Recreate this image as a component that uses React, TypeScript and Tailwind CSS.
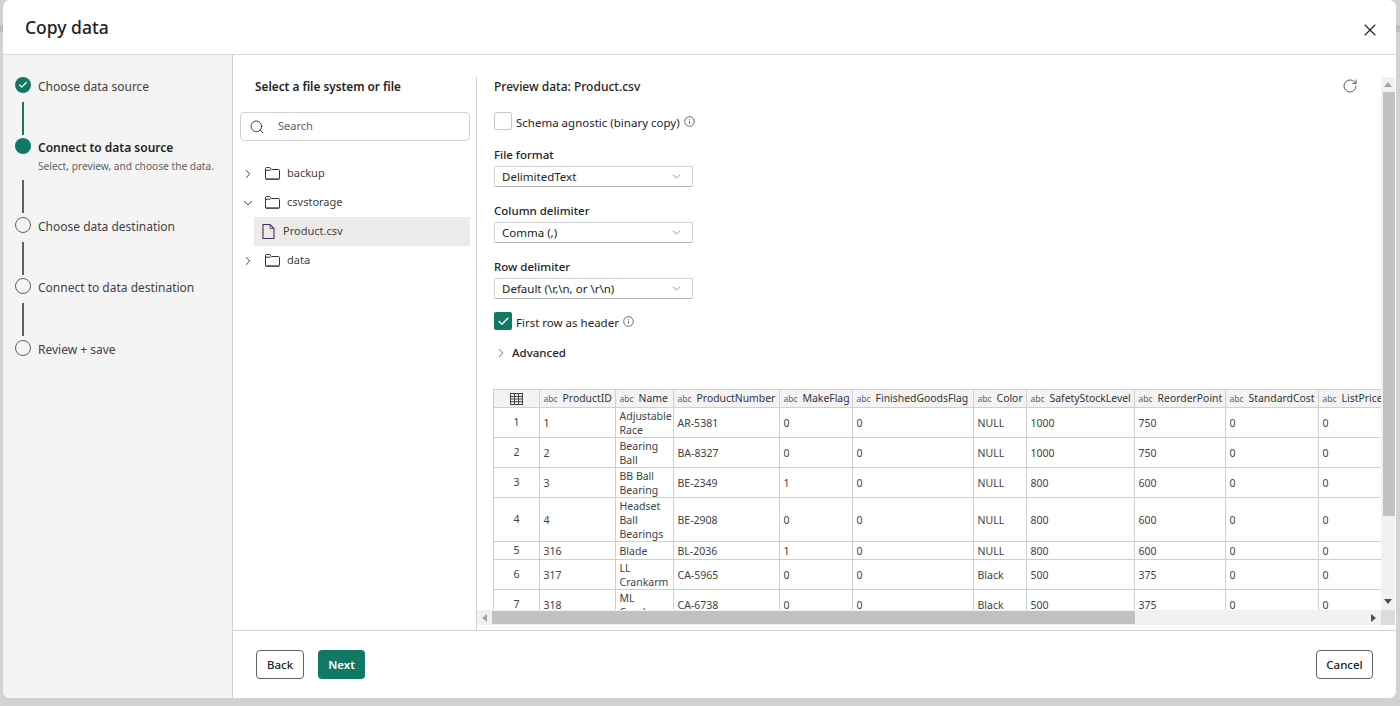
import { Check, ChevronDown, ChevronRight, RotateCw, Search, X } from "lucide-react";

const FONT = "font-['Noto_Sans',sans-serif]";

const STEPS = [
  { label: "Choose data source", state: "done", line: "mt-[6px] mb-[3px] bg-[#117865]" },
  {
    label: "Connect to data source",
    sub: "Select, preview, and choose the data.",
    state: "active",
    line: "mt-[7px] mb-[4px] bg-[#616161]",
  },
  { label: "Choose data destination", state: "todo", line: "mt-[6px] mb-[3px] bg-[#616161]" },
  { label: "Connect to data destination", state: "todo", line: "mt-[6px] mb-[4px] bg-[#616161]" },
  { label: "Review + save", state: "todo" },
];

const COLUMNS = [
  { name: "ProductID", w: 76 },
  { name: "Name", w: 58 },
  { name: "ProductNumber", w: 106 },
  { name: "MakeFlag", w: 73 },
  { name: "FinishedGoodsFlag", w: 121 },
  { name: "Color", w: 53 },
  { name: "SafetyStockLevel", w: 108 },
  { name: "ReorderPoint", w: 91 },
  { name: "StandardCost", w: 93 },
  { name: "ListPrice", w: 80 },
];

const ROWS = [
  { h: "h-[30px]", cells: ["1", "Adjustable Race", "AR-5381", "0", "0", "NULL", "1000", "750", "0", "0"] },
  { h: "h-[30px]", cells: ["2", "Bearing Ball", "BA-8327", "0", "0", "NULL", "1000", "750", "0", "0"] },
  { h: "h-[30px]", cells: ["3", "BB Ball Bearing", "BE-2349", "1", "0", "NULL", "800", "600", "0", "0"] },
  { h: "h-[44px]", cells: ["4", "Headset Ball Bearings", "BE-2908", "0", "0", "NULL", "800", "600", "0", "0"] },
  { h: "h-[18px]", cells: ["316", "Blade", "BL-2036", "1", "0", "NULL", "800", "600", "0", "0"] },
  { h: "h-[30px]", cells: ["317", "LL Crankarm", "CA-5965", "0", "0", "Black", "500", "375", "0", "0"] },
  { h: "h-[30px]", cells: ["318", "ML Crankarm", "CA-6738", "0", "0", "Black", "500", "375", "0", "0"] },
];

function FolderIcon() {
  return (
    <svg width="15" height="13" viewBox="0 0 15 13" fill="none" stroke="#333333" strokeWidth="1">
      <path d="M0.5 11.5V1.5a1 1 0 0 1 1-1h3.2l1.6 2h7.2a1 1 0 0 1 1 1v8a.8.8 0 0 1-.8.8H1.3a.8.8 0 0 1-.8-.8z" />
      <path d="M0.5 3.2h5" />
      <path d="M1 12h13" strokeWidth="1.4" stroke="#555555" />
    </svg>
  );
}

function FileIcon() {
  return (
    <svg width="13" height="15" viewBox="0 0 13 15" fill="none">
      <path d="M1 14.5h11V4.5L8 .5H1z" stroke="#4e2a5e" strokeWidth="1.1" />
      <path d="M8 .5v4h4" stroke="#616161" strokeWidth="1" />
    </svg>
  );
}

function InfoIcon() {
  return (
    <svg width="11" height="11" viewBox="0 0 11 11" fill="none" stroke="#424242" strokeWidth="0.8">
      <circle cx="5.5" cy="5.5" r="4.8" />
      <path d="M5.5 4.8v3M5.5 3v.8" />
    </svg>
  );
}

function GridIcon() {
  return (
    <svg width="13" height="12" viewBox="0 0 13 12" fill="none" stroke="#424242" strokeWidth="1">
      <rect x="0.5" y="0.5" width="12" height="11" />
      <path d="M0.5 3.5h12M0.5 6h12M0.5 8.7h12M4.5 0.5v11M8.5 0.5v11" />
    </svg>
  );
}

function Arrow({ dir, color }: { dir: "up" | "down" | "left" | "right"; color: string }) {
  const points = {
    up: "0,5 4,0 8,5",
    down: "0,0 4,5 8,0",
    left: "5,0 0,4 5,8",
    right: "0,0 5,4 0,8",
  }[dir];
  const vertical = dir === "up" || dir === "down";
  return (
    <svg width={vertical ? 8 : 5} height={vertical ? 5 : 8} viewBox={vertical ? "0 0 8 5" : "0 0 5 8"}>
      <polygon points={points} fill={color} />
    </svg>
  );
}

function Dropdown({ label, value, className }: { label: string; value: string; className: string }) {
  return (
    <div className={className}>
      <div className="text-[11.5px] leading-[16px] font-medium text-[#242424] h-[16px]">{label}</div>
      <div className="mt-[3px] flex h-[21px] w-[199px] items-center justify-between rounded-[2px] border border-[#d1d1d1] border-b-[#b5b5b5] pl-[7px] pr-[9px] text-[11.5px] text-[#242424]">
        <span>{value}</span>
        <ChevronDown size={13} strokeWidth={1.25} color="#616161" />
      </div>
    </div>
  );
}

function CheckRow({ label, checked, className }: { label: string; checked?: boolean; className: string }) {
  return (
    <div className={"flex h-[18px] items-start " + className}>
      {checked ? (
        <div className="flex h-[18px] w-[18px] items-center justify-center rounded-[2px] bg-[#117865]">
          <Check size={13} strokeWidth={2.5} color="#fff" />
        </div>
      ) : (
        <div className="h-[18px] w-[18px] rounded-[2px] border border-[#c8c8c8]" />
      )}
      <span className="ml-[4px] mt-[2px] text-[11.5px] leading-[18px] text-[#242424]">{label}</span>
      <span className="ml-[4px] mt-[4px]">
        <InfoIcon />
      </span>
    </div>
  );
}

function Sidebar() {
  return (
    <div className="w-[230px] shrink-0 border-r border-[#d1d1d1] bg-[#f4f4f4] pl-[12px] pt-[22px]">
      {STEPS.map((s) => (
        <div key={s.label}>
          <div className="flex gap-[7px]">
            {s.state === "done" && (
              <div className="flex h-[16px] w-[16px] shrink-0 items-center justify-center rounded-full bg-[#117865]">
                <Check size={10} strokeWidth={3} color="#fff" />
              </div>
            )}
            {s.state === "active" && <div className="h-[16px] w-[16px] shrink-0 rounded-full bg-[#117865]" />}
            {s.state === "todo" && (
              <div className="h-[16px] w-[16px] shrink-0 rounded-full border border-[#616161]" />
            )}
            <div className="flex-1 pt-[1px]">
              <div
                className={
                  s.state === "active"
                    ? "text-[12px] leading-[18px] font-semibold text-[#242424]"
                    : "text-[12px] leading-[18px] text-[#424242]"
                }
              >
                {s.label}
              </div>
              {s.sub && <div className="mt-[2px] text-[10.2px] leading-[14px] text-[#616161]">{s.sub}</div>}
            </div>
          </div>
          {s.line && <div className={"ml-[7px] h-[33px] w-[1.5px] " + s.line} />}
        </div>
      ))}
    </div>
  );
}

function TreeRow({ label, open }: { label: string; open?: boolean }) {
  return (
    <div className="flex h-[29px] items-center pl-[1px] text-[11px] text-[#424242]">
      <div className="flex w-[14px] justify-center">
        {open ? (
          <ChevronDown size={16} strokeWidth={1.5} color="#242424" />
        ) : (
          <ChevronRight size={16} strokeWidth={1.5} color="#242424" />
        )}
      </div>
      <div className="ml-[10px] flex">
        <FolderIcon />
      </div>
      <span className="ml-[7px]">{label}</span>
    </div>
  );
}

function FilePane() {
  return (
    <div className="w-[243px] shrink-0 pl-[7px] pr-[6px] pt-[22px]">
      <div className="pl-[15px] text-[11.8px] leading-[18px] font-semibold text-[#242424]">
        Select a file system or file
      </div>
      <div className="mt-[17px] flex h-[29px] items-center rounded-[4px] border border-[#d1d1d1] pl-[8px] text-[11px] text-[#616161]">
        <Search size={16} strokeWidth={1.3} color="#242424" />
        <span className="ml-[13px]">Search</span>
      </div>
      <div className="mt-[18px]">
        <TreeRow label="backup" />
        <TreeRow label="csvstorage" open />
        <div className="ml-[14px] flex h-[29px] items-center bg-[#edebe9] pl-[8px] text-[11px] text-[#424242]">
          <FileIcon />
          <span className="ml-[8px]">Product.csv</span>
        </div>
        <TreeRow label="data" />
      </div>
    </div>
  );
}

function PreviewTable() {
  return (
    <div className="h-[221px] overflow-hidden">
      <table className="w-[905px] table-fixed border-collapse text-[10.5px] text-[#424242]">
        <colgroup>
          <col className="w-[46px]" />
          {COLUMNS.map((c) => (
            <col key={c.name} style={{ width: c.w }} />
          ))}
        </colgroup>
        <thead>
          <tr className="h-[18px] bg-[#f3f3f3]">
            <th className="border border-[#d0d0d0] p-0 font-normal">
              <div className="flex justify-center">
                <GridIcon />
              </div>
            </th>
            {COLUMNS.map((c) => (
              <th
                key={c.name}
                className="border border-[#d0d0d0] pl-[3.5px] pr-0 py-0 text-left leading-[16px] font-normal whitespace-nowrap"
              >
                <span className="mr-[5px] text-[8.5px] text-[#616161]">abc</span>
                <span className="text-[10.4px] text-[#333333]">{c.name}</span>
              </th>
            ))}
          </tr>
        </thead>
        <tbody>
          {ROWS.map((r, i) => (
            <tr key={i} className={r.h}>
              <td className="border border-[#d0d0d0] p-0 pt-[1px] text-center">{i + 1}</td>
              {r.cells.map((cell, j) => (
                <td key={j} className="border border-[#d0d0d0] pl-[3.5px] pr-[3px] pt-[1px] pb-0 leading-[14px]">
                  {cell}
                </td>
              ))}
            </tr>
          ))}
        </tbody>
      </table>
    </div>
  );
}

function PreviewPane() {
  return (
    <div className="mt-[22px] flex min-w-0 flex-1 flex-col border-l border-[#d1d1d1]">
      <div className="flex h-[533px]">
        <div className="relative min-w-0 flex-1 overflow-hidden pl-[16px]">
          <div className="h-[312px] pl-[1px]">
            <div className="pt-[1px] text-[12px] leading-[18px] font-medium text-[#242424]">Preview data: Product.csv</div>
            <CheckRow label="Schema agnostic (binary copy)" className="mt-[16px]" />
            <Dropdown label="File format" value="DelimitedText" className="mt-[17px]" />
            <Dropdown label="Column delimiter" value="Comma (,)" className="mt-[16px]" />
            <Dropdown label="Row delimiter" value={"Default (\\r,\\n, or \\r\\n)"} className="mt-[16px]" />
            <CheckRow label="First row as header" checked className="mt-[13px]" />
            <div className="mt-[15px] flex h-[16px] items-center">
              <ChevronRight size={14} strokeWidth={1.2} color="#242424" />
              <span className="ml-[4px] text-[11.5px] font-medium text-[#242424]">Advanced</span>
            </div>
          </div>
          <PreviewTable />
          <div className="absolute right-[23px] top-[1px]">
            <RotateCw size={16} strokeWidth={1.3} color="#424242" />
          </div>
        </div>
        {/* vertical scrollbar */}
        <div className="flex w-[14px] shrink-0 flex-col bg-[#f1f1f1]">
          <div className="flex h-[15px] items-center justify-center">
            <Arrow dir="up" color="#a3a3a3" />
          </div>
          <div className="ml-[2px] h-[424px] bg-[#c1c1c1]" />
          <div className="flex flex-1 items-end justify-center pb-[6px]">
            <Arrow dir="down" color="#505050" />
          </div>
        </div>
      </div>
      {/* horizontal scrollbar */}
      <div className="flex h-[15px]">
        <div className="flex min-w-0 flex-1 items-center bg-[#f1f1f1]">
          <div className="flex w-[15px] justify-center">
            <Arrow dir="left" color="#a3a3a3" />
          </div>
          <div className="h-[13px] w-[643px] bg-[#c1c1c1]" />
          <div className="flex flex-1 justify-end pr-[5px]">
            <Arrow dir="right" color="#505050" />
          </div>
        </div>
        <div className="w-[14px] shrink-0 bg-[#dcdcdc]" />
      </div>
    </div>
  );
}

export default function App() {
  return (
    <div className={"relative flex h-[706px] w-[1400px] bg-[#d2d2d2] pl-[3px] pr-[4px] pb-[8px] " + FONT}>
      {/* page behind the dialog shows through at the edges */}
      <div className="absolute left-0 top-[25px] h-[7px] w-full bg-[#bdbdbd]" />
      <div className="relative flex min-w-0 flex-1 flex-col overflow-hidden rounded-[7px] bg-white">
        <div className="flex h-[55px] shrink-0 items-center justify-between border-b border-[#d9d9d9] pl-[22px] pr-[16px]">
          <div className="text-[17.5px] font-medium text-[#242424]">Copy data</div>
          <X size={20} strokeWidth={1.4} color="#242424" className="mt-[6px]" />
        </div>
        <div className="flex min-h-0 flex-1">
          <Sidebar />
          <div className="flex min-w-0 flex-1 flex-col">
            <div className="flex h-[575px] pr-[1px]">
              <FilePane />
              <PreviewPane />
            </div>
            <div className="flex flex-1 items-center justify-between border-t border-[#d1d1d1] pl-[23px] pr-[23px]">
              <div className="flex gap-[14px]">
                <button className="h-[29px] w-[48px] rounded-[4px] border border-[#616161] bg-white text-[11.5px] font-medium text-[#242424]">
                  Back
                </button>
                <button className="h-[29px] w-[47px] rounded-[4px] bg-[#117865] text-[11.5px] font-semibold text-white">
                  Next
                </button>
              </div>
              <button className="h-[29px] w-[57px] rounded-[4px] border border-[#616161] bg-white text-[11.5px] font-medium text-[#242424]">
                Cancel
              </button>
            </div>
          </div>
        </div>
      </div>
    </div>
  );
}
